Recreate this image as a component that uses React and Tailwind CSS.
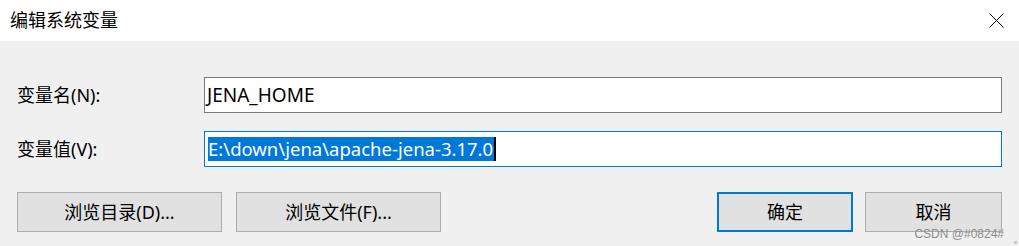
import React from "react";

const FONT = {
	fontFamily:
		'"Noto Sans", "Noto Sans CJK SC", sans-serif',
};

function Row({ label, children }) {
	return (
		<div className="flex items-center h-[36px]">
			<div className="w-[204px] pl-[17px] text-[18px] text-black leading-none">
				{label}
			</div>
			{children}
		</div>
	);
}

function Button({ children, primary, className = "" }) {
	return (
		<button
			className={`h-[40px] bg-[#e1e1e1] text-[18px] text-black leading-none flex items-center justify-center ${
				primary ? "border-2 border-[#0078d7]" : "border border-[#adadad]"
			} ${className}`}
		>
			{children}
		</button>
	);
}

export default function App() {
	return (
		<div
			className="w-[1019px] h-[246px] bg-[#f0f0f0] relative overflow-hidden"
			style={FONT}
		>
			{/* title bar */}
			<div className="h-[41px] bg-white flex items-center justify-between pl-[10px] pr-[15px]">
				<span className="text-[18px] text-black">编辑系统变量</span>
				<svg width="15" height="15" viewBox="0 0 15 15">
					<path d="M0.5 0.5 L14.5 14.5 M14.5 0.5 L0.5 14.5" stroke="#000" strokeWidth="1" />
				</svg>
			</div>

			<div className="pt-[36px]">
				<Row label="变量名(N):">
					<div className="w-[798px] h-[36px] bg-white border border-[#7a7a7a] flex items-center pl-[2px] text-[19px] text-black">
						JENA_HOME
					</div>
				</Row>
				<div className="h-[18px]" />
				<Row label="变量值(V):">
					<div className="w-[798px] h-[36px] bg-white border border-[#0078d7] flex items-center pl-[3px] text-[18.5px]">
						<span className="bg-[#0078d7] text-white h-[24px] flex items-center pr-[1px]">
							E:\down\jena\apache-jena-3.17.0
						</span>
						<span className="w-[2px] h-[24px] bg-black" />
					</div>
				</Row>

				<div className="flex mt-[25px] pl-[17px]">
					<Button className="w-[205px]">浏览目录(D)...</Button>
					<Button className="w-[205px] ml-[14px]">浏览文件(F)...</Button>
					<Button primary className="w-[136px] ml-[276px]">确定</Button>
					<Button className="w-[137px] ml-[12px]">取消</Button>
				</div>
			</div>

			{/* watermark */}
			<div
				className="absolute right-[15px] bottom-[6px] text-[12px] text-[#8c8c8c] leading-none"
				style={{ fontFamily: '"Liberation Sans", sans-serif' }}
			>
				CSDN @#0824#
			</div>
			<div className="absolute right-[2px] bottom-[2px] w-[3px] h-[3px] bg-[#c8c8c8]" />
		</div>
	);
}
